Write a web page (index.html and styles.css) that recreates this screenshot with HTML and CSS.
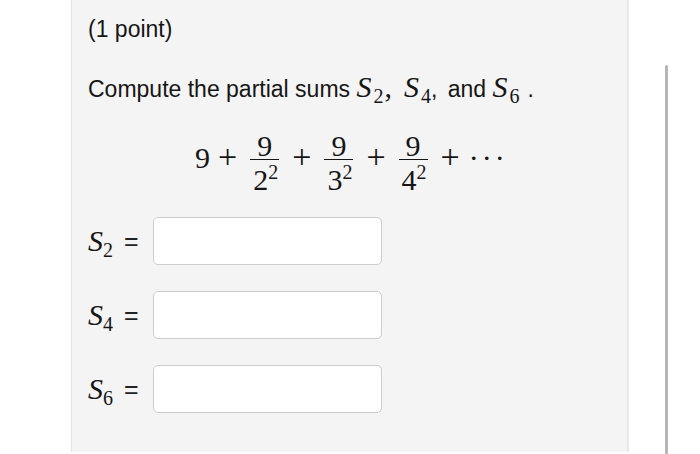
FILE: index.html
```html
<!DOCTYPE html>
<html>
<head>
<meta charset="utf-8">
<link rel="stylesheet" href="styles.css">
</head>
<body>
<div class="panel">
  <p class="points">(1 point)</p>
  <p class="prompt">Compute the partial sums <span class="m"><i>S</i><sub>2</sub><span class="comma">,</span><i>S</i><sub>4</sub></span><span class="tcomma">,</span> and <span class="m"><i>S</i><sub>6</sub></span><span class="stop">.</span></p>
  <div class="formula"><span class="num">9</span><span class="op">+</span><span class="frac"><span class="top">9</span><span class="bot">2<sup>2</sup></span></span><span class="op">+</span><span class="frac"><span class="top">9</span><span class="bot">3<sup>2</sup></span></span><span class="op">+</span><span class="frac"><span class="top">9</span><span class="bot">4<sup>2</sup></span></span><span class="op">+</span><span class="dots">&middot;&middot;&middot;</span></div>
  <div class="answers">
    <div class="row"><span class="label m"><i>S</i><sub>2</sub></span><span class="eq">=</span><span class="box"></span></div>
    <div class="row"><span class="label m"><i>S</i><sub>4</sub></span><span class="eq">=</span><span class="box"></span></div>
    <div class="row"><span class="label m"><i>S</i><sub>6</sub></span><span class="eq">=</span><span class="box"></span></div>
  </div>
</div>
<div class="scrollbar"></div>
</body>
</html>
```
FILE: styles.css
```css
html, body { margin: 0; padding: 0; background: #fff; }
body { width: 700px; height: 454px; overflow: hidden; position: relative; font-family: "Liberation Sans", Arial, sans-serif; color: #161616; }
.panel {
  margin-left: 71px;
  width: 539px;
  height: 452px;
  background: #f4f4f4;
  border-left: 1px solid #e4e4e4;
  border-right: 2px solid #e8e8e8;
  padding-left: 16px;
}
.points { margin: 0; padding-top: 16px; font-size: 23px; line-height: 26px; }
.prompt { margin: 34px 0 0; height: 26px; font-size: 23px; line-height: 26px; white-space: nowrap; }
.m { font-family: "Liberation Serif", "Times New Roman", serif; font-size: 30px; line-height: 0; }
.m i { font-style: italic; margin-right: 2px; }
.m sub { font-size: 20px; vertical-align: -6px; line-height: 0; }
.comma { margin-right: 12px; margin-left: 1px; }
.tcomma { margin-right: 4px; }
.stop { margin-left: 8px; }
.formula {
  margin-left: 107px; margin-top: 33px; height: 62px;
  font-family: "Liberation Serif", "Times New Roman", serif; font-size: 30px;
  line-height: 21px; white-space: nowrap;
}
.num { margin-right: 8px; }
.op { font-size: 34px; }
.frac { display: inline-block; vertical-align: -22px; margin: 0 13px; width: 29px; }
.frac .top { display: block; padding-bottom: 3px; border-bottom: 1px solid #161616; text-align: center; }
.frac .bot { display: block; padding-top: 8.5px; text-align: center; padding-left: 2px; }
.frac sup { font-size: 20px; vertical-align: 11px; line-height: 0; }
.dots { margin-left: 9px; letter-spacing: 3px; }
.answers { margin-top: 20px; display: flex; flex-direction: column; gap: 26px; }
.row { display: flex; align-items: center; height: 48px; }
.label { width: 36px; line-height: 30px; }
.label i { margin-right: 0; }
.eq { font-size: 25px; width: 29px; color: #222; line-height: 28px; }
.box { width: 227px; height: 46px; background: #fff; border: 1px solid #cdcdcd; border-radius: 5px; }
.scrollbar { position: absolute; left: 665px; top: 65px; width: 3px; height: 400px; background: #b6b6b6; border-radius: 2px; }
```
